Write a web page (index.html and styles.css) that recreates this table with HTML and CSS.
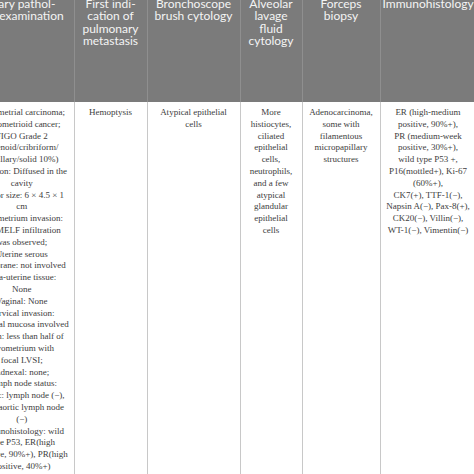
FILE: index.html
```html
<!DOCTYPE html>
<html lang="en">
<head>
<meta charset="utf-8">
<title>Case table</title>
<link rel="stylesheet" href="styles.css">
</head>
<body>
<table class="grid">
  <colgroup>
    <col class="w1"><col class="w2"><col class="w3"><col class="w4"><col class="w5"><col class="w6">
  </colgroup>
  <thead>
    <tr>
      <th class="c1">Primary pathol-<br>ogical examination</th>
      <th>First indi-<br>cation of<br>pulmonary<br>metastasis</th>
      <th>Bronchoscope<br>brush cytology</th>
      <th>Alveolar<br>lavage<br>fluid<br>cytology</th>
      <th>Forceps<br>biopsy</th>
      <th>Immunohistology</th>
    </tr>
  </thead>
  <tbody>
    <tr>
      <td class="c1">Endometrial carcinoma;<br>Endometrioid cancer;<br>FIGO Grade 2<br>(adenoid/cribriform/<br>papillary/solid 10%)<br>Location: Diffused in the<br>cavity<br>Tumor size: 6 × 4.5 × 1<br>cm<br>Myometrium invasion:<br>No MELF infiltration<br>was observed;<br>Uterine serous<br>membrane: not involved<br>Para-uterine tissue:<br>None<br>Vaginal: None<br>Cervical invasion:<br>Cervical mucosa involved<br>Depth: less than half of<br>myometrium with<br>focal LVSI;<br>Adnexal: none;<br>Lymph node status:<br>Pelvic: lymph node (−),<br>Para-aortic lymph node<br>(−)<br>Immunohistology: wild<br>type P53, ER(high<br>positive, 90%+), PR(high<br>positive, 40%+)</td>
      <td>Hemoptysis</td>
      <td>Atypical epithelial<br>cells</td>
      <td>More<br>histiocytes,<br>ciliated<br>epithelial<br>cells,<br>neutrophils,<br>and a few<br>atypical<br>glandular<br>epithelial<br>cells</td>
      <td>Adenocarcinoma,<br>some with<br>filamentous<br>micropapillary<br>structures</td>
      <td>ER (high-medium<br>positive, 90%+),<br>PR (medium-week<br>positive, 30%+),<br>wild type P53 +,<br>P16(mottled+), Ki-67<br>(60%+),<br>CK7(+), TTF-1(−),<br>Napsin A(−), Pax-8(+),<br>CK20(−), Villin(−),<br>WT-1(−), Vimentin(−)</td>
    </tr>
  </tbody>
</table>
</body>
</html>
```
FILE: styles.css
```css
html, body {
  margin: 0;
  height: 474px;
  overflow: hidden;
  background: #ffffff;
}

.grid {
  border-collapse: collapse;
  table-layout: fixed;
  width: 536px;
  margin: -2px 0 0 -60px;
}

.w1 { width: 134px; }
.w2 { width: 73px; }
.w3 { width: 93px; }
.w4 { width: 62px; }
.w5 { width: 78px; }
.w6 { width: 96px; }

th {
  background: #7b7b7b;
  color: #f4f4f4;
  font-family: Lato, "Open Sans", sans-serif;
  font-size: 12px;
  line-height: 12.4px;
  font-weight: normal;
  height: 104px;
  vertical-align: top;
  text-align: center;
  white-space: nowrap;
  padding: 0 2px;
  border-right: 1px solid #8f8f8f;
}

td {
  font-family: "Liberation Serif", "Times New Roman", serif;
  font-size: 9px;
  line-height: 11.8px;
  color: #3d3d3d;
  vertical-align: top;
  text-align: center;
  white-space: nowrap;
  padding: 5px 2px 30px;
  border-right: 1px solid #c8c8c8;
}

th.c1 {
  padding-left: 17px;
  padding-right: 1px;
}

td.c1 {
  padding-left: 31px;
  padding-right: 1px;
}
```
